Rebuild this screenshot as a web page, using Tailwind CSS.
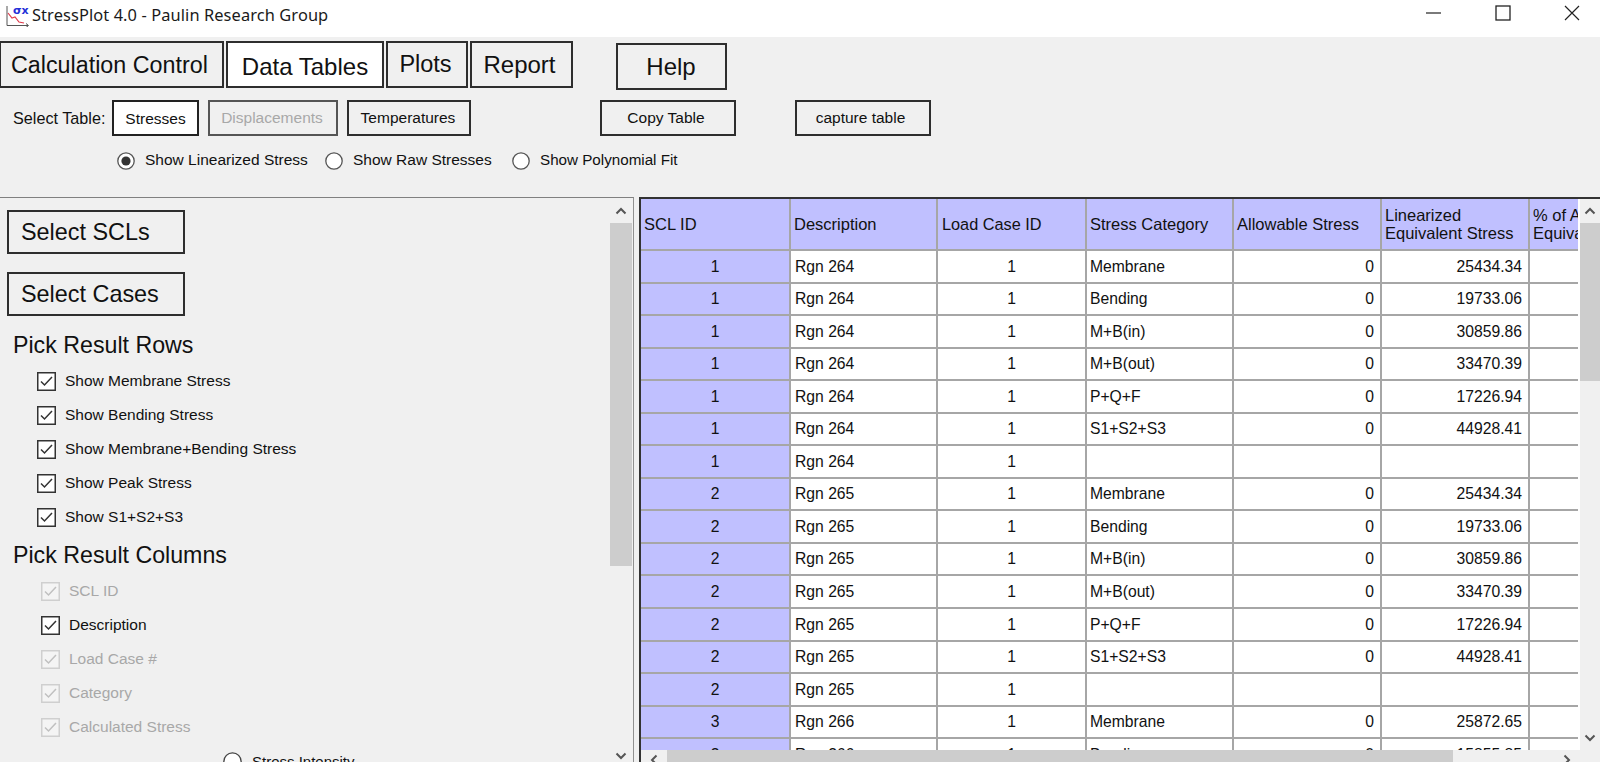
<!DOCTYPE html>
<html>
<head>
<meta charset="utf-8">
<script src="https://cdn.jsdelivr.net/npm/@tailwindcss/browser@4"></script>
</head>
<body class="bg-[#f0f0f0]">
<div class="w-[1600px] h-[762px] overflow-hidden bg-[#f0f0f0] text-[#111] font-['Liberation_Sans',Arial,sans-serif]">
  <!-- title bar -->
  <div class="h-[37px] bg-white flex items-center relative">
    <svg class="ml-[5px] w-[24px] h-[22px] mb-[6px]" viewBox="0 0 24 22" fill="none">
      <path d="M2 1V20.500H23" stroke="#555" stroke-width="1"/>
      <path d="M21 18.500l2.500 2-2.500 2" stroke="#555" stroke-width="1"/>
      <path d="M3 8l4 5 3-1 4 5 5 1" stroke="#e0394a" stroke-width="1.200"/>
      <text x="8" y="9" font-size="11" font-weight="bold" font-family="'DejaVu Sans'" fill="#2430d8">σx</text>
    </svg>
    <span class="ml-[3px] mb-[6px] text-[16.400px] tracking-[0.1px] text-[#1a1a1a] font-['Noto_Sans',sans-serif]">StressPlot 4.0 - Paulin Research Group</span>
    <div class="ml-auto flex items-center mb-[11px]">
      <svg class="w-[16px] h-[16px] mr-[52px]" viewBox="0 0 16 16"><path d="M0 8H15" stroke="#222" stroke-width="1.200"/></svg>
      <svg class="w-[16px] h-[16px] mr-[53px] ml-[1px]" viewBox="0 0 16 16" fill="none"><rect x="1" y="1" width="14" height="14" stroke="#222" stroke-width="1.300"/></svg>
      <svg class="w-[16px] h-[16px] mr-[20px]" viewBox="0 0 16 16" fill="none"><path d="M1 1L15 15M15 1L1 15" stroke="#222" stroke-width="1.200"/></svg>
    </div>
  </div>

  <!-- header controls -->
  <div class="h-[160px]">
    <div class="flex items-start pt-[4px] text-[24px]">
      <div class="ml-[-1px] w-[225px] h-[47px] border-2 border-[#2e2e2e] flex items-center pl-[10px] pt-[2px] text-[23.300px]">Calculation Control</div>
      <div class="ml-[2px] w-[158px] h-[47px] border-2 border-[#2e2e2e] bg-white flex items-center justify-center pt-[4px]">Data Tables</div>
      <div class="ml-[2px] w-[82px] h-[47px] border-2 border-[#2e2e2e] flex items-center justify-center pt-[1px] pr-[3px] text-[23.500px]">Plots</div>
      <div class="ml-[2px] w-[103px] h-[47px] border-2 border-[#2e2e2e] flex items-center justify-center pt-[1px] pr-[4px]">Report</div>
      <div class="ml-[43px] mt-[2px] w-[111px] h-[47px] border-2 border-[#2e2e2e] flex items-center justify-center pr-[1px]">Help</div>
    </div>
    <div class="flex items-center mt-[10px] h-[36px] text-[15.500px]">
      <span class="ml-[13px] w-[99px] text-[16.200px]">Select Table:</span>
      <div class="w-[87px] h-[36px] border-2 border-[#222] bg-white flex items-center justify-center pt-[2px]">Stresses</div>
      <div class="ml-[9px] w-[130px] h-[36px] border-2 border-[#555] flex items-center justify-center text-[#a8a8a8] pr-[2px]">Displacements</div>
      <div class="ml-[9px] w-[124px] h-[36px] border-2 border-[#2e2e2e] flex items-center justify-center pr-[2px]">Temperatures</div>
      <div class="ml-[129px] w-[136px] h-[36px] border-2 border-[#2e2e2e] flex items-center justify-center pr-[4px]">Copy Table</div>
      <div class="ml-[59px] w-[136px] h-[36px] border-2 border-[#2e2e2e] flex items-center justify-center pr-[5px]">capture table</div>
    </div>
    <div class="flex items-center mt-[15px] h-[18px] text-[15.500px] whitespace-nowrap">
      <svg class="ml-[117px] w-[18px] h-[18px] mt-[1px]" viewBox="0 0 18 18"><circle cx="9" cy="9" r="8.200" fill="#fff" stroke="#555" stroke-width="1.300"/><circle cx="9" cy="9" r="4.600" fill="#333"/></svg>
      <span class="ml-[10px] w-[157px]">Show Linearized Stress</span>
      <svg class="ml-[23px] w-[18px] h-[18px] mt-[1px]" viewBox="0 0 18 18"><circle cx="9" cy="9" r="8.200" fill="#fff" stroke="#555" stroke-width="1.300"/></svg>
      <span class="ml-[10px] w-[150px]">Show Raw Stresses</span>
      <svg class="ml-[9px] w-[18px] h-[18px] mt-[1px]" viewBox="0 0 18 18"><circle cx="9" cy="9" r="8.200" fill="#fff" stroke="#555" stroke-width="1.300"/></svg>
      <span class="ml-[10px] text-[15.200px]">Show Polynomial Fit</span>
    </div>
  </div>

  <!-- main split -->
  <div class="flex h-[565px]">
    <!-- left panel -->
    <div class="w-[634px] h-[565px] border-t border-t-[#808080] border-r border-r-[#909090] flex overflow-hidden">
      <div class="w-[608px] text-[15.500px]">
        <div class="ml-[7px] mt-[12px] w-[178px] h-[44px] border-2 border-[#2e2e2e] flex items-center pl-[12px] pt-[1px] text-[23.400px]">Select SCLs</div>
        <div class="ml-[7px] mt-[18px] w-[178px] h-[44px] border-2 border-[#2e2e2e] flex items-center pl-[12px] pt-[1px] text-[23.400px]">Select Cases</div>
        <div class="ml-[13px] mt-[17px] h-[24px] flex items-center text-[23.200px]">Pick Result Rows</div>
        <div class="mt-[7px]">
          <div class="h-[34px] flex items-center pl-[37px]"><svg class="w-[19px] h-[19px] shrink-0" viewBox="0 0 19 19" fill="none"><rect x=".75" y=".75" width="17.500" height="17.500" fill="#fff" stroke="#333" stroke-width="1.500"/><path d="M4 9.500l3.500 3.500L15 5" stroke="#333" stroke-width="1.500"/></svg><span class="ml-[9px]">Show Membrane Stress</span></div>
          <div class="h-[34px] flex items-center pl-[37px]"><svg class="w-[19px] h-[19px] shrink-0" viewBox="0 0 19 19" fill="none"><rect x=".75" y=".75" width="17.500" height="17.500" fill="#fff" stroke="#333" stroke-width="1.500"/><path d="M4 9.500l3.500 3.500L15 5" stroke="#333" stroke-width="1.500"/></svg><span class="ml-[9px]">Show Bending Stress</span></div>
          <div class="h-[34px] flex items-center pl-[37px]"><svg class="w-[19px] h-[19px] shrink-0" viewBox="0 0 19 19" fill="none"><rect x=".75" y=".75" width="17.500" height="17.500" fill="#fff" stroke="#333" stroke-width="1.500"/><path d="M4 9.500l3.500 3.500L15 5" stroke="#333" stroke-width="1.500"/></svg><span class="ml-[9px]">Show Membrane+Bending Stress</span></div>
          <div class="h-[34px] flex items-center pl-[37px]"><svg class="w-[19px] h-[19px] shrink-0" viewBox="0 0 19 19" fill="none"><rect x=".75" y=".75" width="17.500" height="17.500" fill="#fff" stroke="#333" stroke-width="1.500"/><path d="M4 9.500l3.500 3.500L15 5" stroke="#333" stroke-width="1.500"/></svg><span class="ml-[9px]">Show Peak Stress</span></div>
          <div class="h-[34px] flex items-center pl-[37px]"><svg class="w-[19px] h-[19px] shrink-0" viewBox="0 0 19 19" fill="none"><rect x=".75" y=".75" width="17.500" height="17.500" fill="#fff" stroke="#333" stroke-width="1.500"/><path d="M4 9.500l3.500 3.500L15 5" stroke="#333" stroke-width="1.500"/></svg><span class="ml-[9px]">Show S1+S2+S3</span></div>
        </div>
        <div class="ml-[13px] mt-[9px] h-[24px] flex items-center text-[23.200px]">Pick Result Columns</div>
        <div class="mt-[7px]">
          <div class="h-[34px] flex items-center pl-[41px] text-[#a8a8a8]"><svg class="w-[19px] h-[19px] shrink-0" viewBox="0 0 19 19" fill="none"><rect x=".75" y=".75" width="17.500" height="17.500" fill="#f4f4f4" stroke="#cfcfcf" stroke-width="1.500"/><path d="M4 9.500l3.500 3.500L15 5" stroke="#c0c0c0" stroke-width="1.500"/></svg><span class="ml-[9px]">SCL ID</span></div>
          <div class="h-[34px] flex items-center pl-[41px]"><svg class="w-[19px] h-[19px] shrink-0" viewBox="0 0 19 19" fill="none"><rect x=".75" y=".75" width="17.500" height="17.500" fill="#fff" stroke="#333" stroke-width="1.500"/><path d="M4 9.500l3.500 3.500L15 5" stroke="#333" stroke-width="1.500"/></svg><span class="ml-[9px]">Description</span></div>
          <div class="h-[34px] flex items-center pl-[41px] text-[#a8a8a8]"><svg class="w-[19px] h-[19px] shrink-0" viewBox="0 0 19 19" fill="none"><rect x=".75" y=".75" width="17.500" height="17.500" fill="#f4f4f4" stroke="#cfcfcf" stroke-width="1.500"/><path d="M4 9.500l3.500 3.500L15 5" stroke="#c0c0c0" stroke-width="1.500"/></svg><span class="ml-[9px]">Load Case #</span></div>
          <div class="h-[34px] flex items-center pl-[41px] text-[#a8a8a8]"><svg class="w-[19px] h-[19px] shrink-0" viewBox="0 0 19 19" fill="none"><rect x=".75" y=".75" width="17.500" height="17.500" fill="#f4f4f4" stroke="#cfcfcf" stroke-width="1.500"/><path d="M4 9.500l3.500 3.500L15 5" stroke="#c0c0c0" stroke-width="1.500"/></svg><span class="ml-[9px]">Category</span></div>
          <div class="h-[34px] flex items-center pl-[41px] text-[#a8a8a8]"><svg class="w-[19px] h-[19px] shrink-0" viewBox="0 0 19 19" fill="none"><rect x=".75" y=".75" width="17.500" height="17.500" fill="#f4f4f4" stroke="#cfcfcf" stroke-width="1.500"/><path d="M4 9.500l3.500 3.500L15 5" stroke="#c0c0c0" stroke-width="1.500"/></svg><span class="ml-[9px]">Calculated Stress</span></div>
          <div class="h-[34px] flex items-center pl-[223px] pt-[1px]"><svg class="w-[19px] h-[19px] shrink-0" viewBox="0 0 18 18"><circle cx="9" cy="9" r="8.200" fill="#fff" stroke="#444" stroke-width="1.300"/></svg><span class="ml-[10px] text-[15px] pt-[1px]">Stress Intensity</span></div>
        </div>
      </div>
      <!-- left scrollbar -->
      <div class="w-[25px] h-full flex flex-col items-center">
        <div class="h-[25px] flex items-center justify-center shrink-0"><svg class="w-[12px] h-[8px]" viewBox="0 0 12 8" fill="none"><path d="M1.500 6.500L6 2l4.500 4.500" stroke="#555" stroke-width="2"/></svg></div>
        <div class="w-[22px] h-[343px] bg-[#cdcdcd] shrink-0"></div>
        <div class="mt-auto mb-[-1px] h-[14px] flex items-center justify-center shrink-0"><svg class="w-[12px] h-[8px]" viewBox="0 0 12 8" fill="none"><path d="M1.500 1.500L6 6l4.500-4.500" stroke="#555" stroke-width="2"/></svg></div>
      </div>
    </div>

    <!-- right panel -->
    <div class="ml-[5px] w-[961px] h-[565px] border-t-2 border-l-2 border-[#333] flex flex-col overflow-hidden">
      <div class="flex h-[551px] shrink-0">
        <div class="w-[939px] h-full bg-white overflow-hidden text-[15.700px]">
          <div class="grid grid-cols-[150px_147px_149px_147px_148px_148px_48px] grid-rows-[52px_repeat(16,32.550px)] w-[937px] overflow-hidden [&>div]:flex [&>div]:items-center [&>div]:border-r-2 [&>div]:border-b-2 [&>div]:border-[#a6a6a6] [&>div]:whitespace-nowrap">
            <div class="bg-[#c0c0ff] pl-[3px] text-[16.500px]">SCL ID</div>
            <div class="bg-[#c0c0ff] pl-[3px] text-[16.500px]">Description</div>
            <div class="bg-[#c0c0ff] pl-[4px] text-[16.300px]">Load Case ID</div>
            <div class="bg-[#c0c0ff] pl-[3px] text-[16.500px]">Stress Category</div>
            <div class="bg-[#c0c0ff] pl-[3px] text-[16.500px]">Allowable Stress</div>
            <div class="bg-[#c0c0ff] pl-[3px] text-[16.500px] leading-[18px]">Linearized<br>Equivalent Stress</div>
            <div class="bg-[#c0c0ff] pl-[3px] text-[16.500px] leading-[18px] overflow-hidden !border-r-0">% of Allowable<br>Equivalent</div>

            <div class="bg-[#c0c0ff] justify-center">1</div><div class="pl-[4px]">Rgn 264</div><div class="justify-center">1</div><div class="pl-[3px]">Membrane</div><div class="justify-end pr-[6px]">0</div><div class="justify-end pr-[6px]">25434.34</div><div class="!border-r-0"></div>
            <div class="bg-[#c0c0ff] justify-center">1</div><div class="pl-[4px]">Rgn 264</div><div class="justify-center">1</div><div class="pl-[3px]">Bending</div><div class="justify-end pr-[6px]">0</div><div class="justify-end pr-[6px]">19733.06</div><div class="!border-r-0"></div>
            <div class="bg-[#c0c0ff] justify-center">1</div><div class="pl-[4px]">Rgn 264</div><div class="justify-center">1</div><div class="pl-[3px]">M+B(in)</div><div class="justify-end pr-[6px]">0</div><div class="justify-end pr-[6px]">30859.86</div><div class="!border-r-0"></div>
            <div class="bg-[#c0c0ff] justify-center">1</div><div class="pl-[4px]">Rgn 264</div><div class="justify-center">1</div><div class="pl-[3px]">M+B(out)</div><div class="justify-end pr-[6px]">0</div><div class="justify-end pr-[6px]">33470.39</div><div class="!border-r-0"></div>
            <div class="bg-[#c0c0ff] justify-center">1</div><div class="pl-[4px]">Rgn 264</div><div class="justify-center">1</div><div class="pl-[3px]">P+Q+F</div><div class="justify-end pr-[6px]">0</div><div class="justify-end pr-[6px]">17226.94</div><div class="!border-r-0"></div>
            <div class="bg-[#c0c0ff] justify-center">1</div><div class="pl-[4px]">Rgn 264</div><div class="justify-center">1</div><div class="pl-[3px]">S1+S2+S3</div><div class="justify-end pr-[6px]">0</div><div class="justify-end pr-[6px]">44928.41</div><div class="!border-r-0"></div>
            <div class="bg-[#c0c0ff] justify-center">1</div><div class="pl-[4px]">Rgn 264</div><div class="justify-center">1</div><div></div><div></div><div></div><div class="!border-r-0"></div>
            <div class="bg-[#c0c0ff] justify-center">2</div><div class="pl-[4px]">Rgn 265</div><div class="justify-center">1</div><div class="pl-[3px]">Membrane</div><div class="justify-end pr-[6px]">0</div><div class="justify-end pr-[6px]">25434.34</div><div class="!border-r-0"></div>
            <div class="bg-[#c0c0ff] justify-center">2</div><div class="pl-[4px]">Rgn 265</div><div class="justify-center">1</div><div class="pl-[3px]">Bending</div><div class="justify-end pr-[6px]">0</div><div class="justify-end pr-[6px]">19733.06</div><div class="!border-r-0"></div>
            <div class="bg-[#c0c0ff] justify-center">2</div><div class="pl-[4px]">Rgn 265</div><div class="justify-center">1</div><div class="pl-[3px]">M+B(in)</div><div class="justify-end pr-[6px]">0</div><div class="justify-end pr-[6px]">30859.86</div><div class="!border-r-0"></div>
            <div class="bg-[#c0c0ff] justify-center">2</div><div class="pl-[4px]">Rgn 265</div><div class="justify-center">1</div><div class="pl-[3px]">M+B(out)</div><div class="justify-end pr-[6px]">0</div><div class="justify-end pr-[6px]">33470.39</div><div class="!border-r-0"></div>
            <div class="bg-[#c0c0ff] justify-center">2</div><div class="pl-[4px]">Rgn 265</div><div class="justify-center">1</div><div class="pl-[3px]">P+Q+F</div><div class="justify-end pr-[6px]">0</div><div class="justify-end pr-[6px]">17226.94</div><div class="!border-r-0"></div>
            <div class="bg-[#c0c0ff] justify-center">2</div><div class="pl-[4px]">Rgn 265</div><div class="justify-center">1</div><div class="pl-[3px]">S1+S2+S3</div><div class="justify-end pr-[6px]">0</div><div class="justify-end pr-[6px]">44928.41</div><div class="!border-r-0"></div>
            <div class="bg-[#c0c0ff] justify-center">2</div><div class="pl-[4px]">Rgn 265</div><div class="justify-center">1</div><div></div><div></div><div></div><div class="!border-r-0"></div>
            <div class="bg-[#c0c0ff] justify-center">3</div><div class="pl-[4px]">Rgn 266</div><div class="justify-center">1</div><div class="pl-[3px]">Membrane</div><div class="justify-end pr-[6px]">0</div><div class="justify-end pr-[6px]">25872.65</div><div class="!border-r-0"></div>
            <div class="bg-[#c0c0ff] justify-center">3</div><div class="pl-[4px]">Rgn 266</div><div class="justify-center">1</div><div class="pl-[3px]">Bending</div><div class="justify-end pr-[6px]">0</div><div class="justify-end pr-[6px]">15855.85</div><div class="!border-r-0"></div>
          </div>
        </div>
        <!-- right scrollbar -->
        <div class="w-[20px] h-full flex flex-col items-center bg-[#f0f0f0]">
          <div class="h-[24px] flex items-center justify-center shrink-0"><svg class="w-[12px] h-[8px]" viewBox="0 0 12 8" fill="none"><path d="M1.500 6.500L6 2l4.500 4.500" stroke="#555" stroke-width="2"/></svg></div>
          <div class="w-[20px] h-[158px] bg-[#cdcdcd] shrink-0"></div>
          <div class="mt-auto h-[24px] flex items-center justify-center shrink-0"><svg class="w-[12px] h-[8px]" viewBox="0 0 12 8" fill="none"><path d="M1.500 1.500L6 6l4.500-4.500" stroke="#555" stroke-width="2"/></svg></div>
        </div>
      </div>
      <!-- horizontal scrollbar -->
      <div class="h-[20px] flex items-start shrink-0">
        <div class="w-[26px] h-[20px] flex items-center justify-center shrink-0"><svg class="w-[8px] h-[12px]" viewBox="0 0 8 12" fill="none"><path d="M6.500 1.500L2 6l4.500 4.500" stroke="#555" stroke-width="2"/></svg></div>
        <div class="w-[786px] h-[20px] bg-[#cdcdcd] shrink-0"></div>
        <div class="ml-[104px] w-[20px] h-[20px] flex items-center justify-center shrink-0"><svg class="w-[8px] h-[12px]" viewBox="0 0 8 12" fill="none"><path d="M1.500 1.500L6 6l-4.500 4.500" stroke="#555" stroke-width="2"/></svg></div>
      </div>
    </div>
  </div>
</div>
</body>
</html>
